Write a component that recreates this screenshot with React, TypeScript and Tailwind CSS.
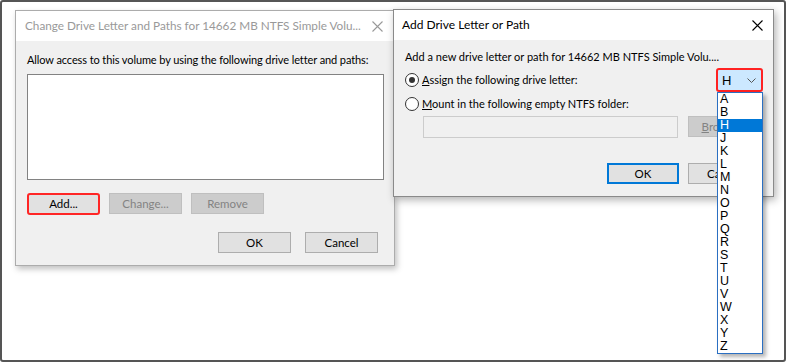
import React from 'react';

const letters = ['A', 'B', 'H', 'J', 'K', 'L', 'M', 'N', 'O', 'P', 'Q', 'R', 'S', 'T', 'U', 'V', 'W', 'X', 'Y', 'Z'];

function CloseIcon({ className }: { className: string }) {
  return (
    <svg width="11" height="11" viewBox="0 0 11 11" className={className}>
      <path d="M0.5 0.5L10.5 10.5M10.5 0.5L0.5 10.5" stroke="currentColor" strokeWidth="1.1" fill="none" />
    </svg>
  );
}

function Radio({ checked, children }: { checked?: boolean; children: React.ReactNode }) {
  return (
    <div className="flex h-[16px] items-center gap-[3px]">
      <span className="flex h-[14px] w-[14px] items-center justify-center rounded-full border border-[#333] bg-white">
        {checked && <span className="h-[6px] w-[6px] rounded-full bg-[#333]" />}
      </span>
      <span className="whitespace-nowrap text-[11px] leading-[16px] text-black">{children}</span>
    </div>
  );
}

function Btn({ children, disabled }: { children: React.ReactNode; disabled?: boolean }) {
  return (
    <button
      className={
        disabled
          ? 'flex h-[21px] w-[73px] items-center justify-center border border-[#bfbfbf] bg-[#cccccc] text-[11.5px] text-[#838383]'
          : 'flex h-[21px] w-[73px] items-center justify-center border border-[#adadad] bg-[#e1e1e1] text-[11.5px] text-black'
      }
    >
      {children}
    </button>
  );
}

export default function App() {
  return (
    <div className="relative h-[364px] w-[788px] overflow-hidden bg-white font-['Lato',sans-serif]">
      <div className="absolute left-0 top-0 h-[362px] w-[786px] rounded-[3px] border-2 border-[#555]" />

      {/* left dialog */}
      <div className="absolute left-[15px] top-[10px] flex h-[256px] w-[380px] flex-col border border-[#acacac] bg-[#f0f0f0] shadow-[2px_3px_6px_rgba(0,0,0,0.25)]">
        <div className="flex h-[30px] items-center justify-between bg-white pl-[9px] pr-[11px]">
          <span className="whitespace-nowrap text-[11.75px] text-[#999]">
            Change Drive Letter and Paths for 14662 MB NTFS Simple Volu...
          </span>
          <CloseIcon className="text-[#999]" />
        </div>
        <div className="flex flex-1 flex-col px-[11px] pt-[11px]">
          <p className="whitespace-nowrap text-[11px] leading-[16px] tracking-[-0.1px] text-black">
            Allow access to this volume by using the following drive letter and paths:
          </p>
          <div className="mt-[6px] h-[106px] w-[357px] border border-[#828282] bg-white" />
          <div className="mt-[13px] flex items-start gap-[9px]">
            <button className="flex h-[22px] w-[73px] items-center justify-center rounded-[3px] border-2 border-[#ff2626] bg-[#e1e1e1] text-[11.5px] text-black">
              Add...
            </button>
            <Btn disabled>Change...</Btn>
            <Btn disabled>Remove</Btn>
          </div>
          <div className="mr-[5px] mt-[17px] flex justify-end gap-[14px]">
            <Btn>OK</Btn>
            <Btn>Cancel</Btn>
          </div>
        </div>
      </div>

      {/* right dialog */}
      <div className="absolute left-[393px] top-[9px] flex h-[188px] w-[381px] flex-col border border-[#8a8a8a] bg-[#f0f0f0] shadow-[2px_3px_8px_rgba(0,0,0,0.3)]">
        <div className="flex h-[30px] items-center justify-between bg-white pl-[8px] pr-[10px]">
          <span className="whitespace-nowrap text-[12px] text-black">Add Drive Letter or Path</span>
          <CloseIcon className="text-black" />
        </div>
        <div className="flex flex-1 flex-col px-[11px] pt-[9px]">
          <p className="whitespace-nowrap text-[11px] leading-[16px] text-black">
            Add a new drive letter or path for 14662 MB NTFS Simple Volu....
          </p>
          <div className="mt-[7px]">
            <Radio checked>
              <span className="underline">A</span>ssign the following drive letter:
            </Radio>
          </div>
          <div className="mt-[8px]">
            <Radio>
              <span className="underline">M</span>ount in the following empty NTFS folder:
            </Radio>
          </div>
          <div className="ml-[18px] mt-[4px] flex gap-[10px]">
            <div className="h-[22px] w-[255px] border border-[#cccccc] bg-[#f0f0f0]" />
            <button className="flex h-[21px] w-[73px] items-center justify-center border border-[#bfbfbf] bg-[#cccccc] text-[11.5px] text-[#838383]">
              <span className="underline">B</span>rowse...
            </button>
          </div>
          <div className="mr-[2px] mt-[25px] flex justify-end gap-[9px]">
            <button className="flex h-[21px] w-[72px] items-center justify-center border-2 border-[#0078d7] bg-[#e1e1e1] text-[11.5px] text-black">
              OK
            </button>
            <button className="flex h-[21px] w-[72px] items-center justify-center border border-[#adadad] bg-[#e1e1e1] text-[11.5px] text-black">
              Cancel
            </button>
          </div>
        </div>
      </div>

      {/* combo box */}
      <div className="absolute left-[716px] top-[68px] flex h-[24px] w-[47px] items-center justify-between rounded-[3px] border-2 border-[#f22] bg-[#cce8ff] pl-[4px] pr-[5px]">
        <span className="font-['Liberation_Sans',sans-serif] text-[13px] leading-none text-black">H</span>
        <svg width="9" height="5" viewBox="0 0 9 5">
          <path d="M0.5 0.5L4.5 4.5L8.5 0.5" stroke="#555" strokeWidth="1" fill="none" />
        </svg>
      </div>

      {/* dropdown list */}
      <div className="absolute left-[717px] top-[92px] flex w-[46px] flex-col border border-[#2a6fc2] bg-white shadow-[3px_3px_4px_rgba(0,0,0,0.3)]">
        {letters.map((l) => (
          <div
            key={l}
            className={
              l === 'H'
                ? "h-[13px] bg-[#0078d7] pl-[2px] font-['Liberation_Sans',sans-serif] text-[12.5px] leading-[13px] text-white"
                : "h-[13px] pl-[2px] font-['Liberation_Sans',sans-serif] text-[12.5px] leading-[13px] text-black"
            }
          >
            {l}
          </div>
        ))}
      </div>
    </div>
  );
}
